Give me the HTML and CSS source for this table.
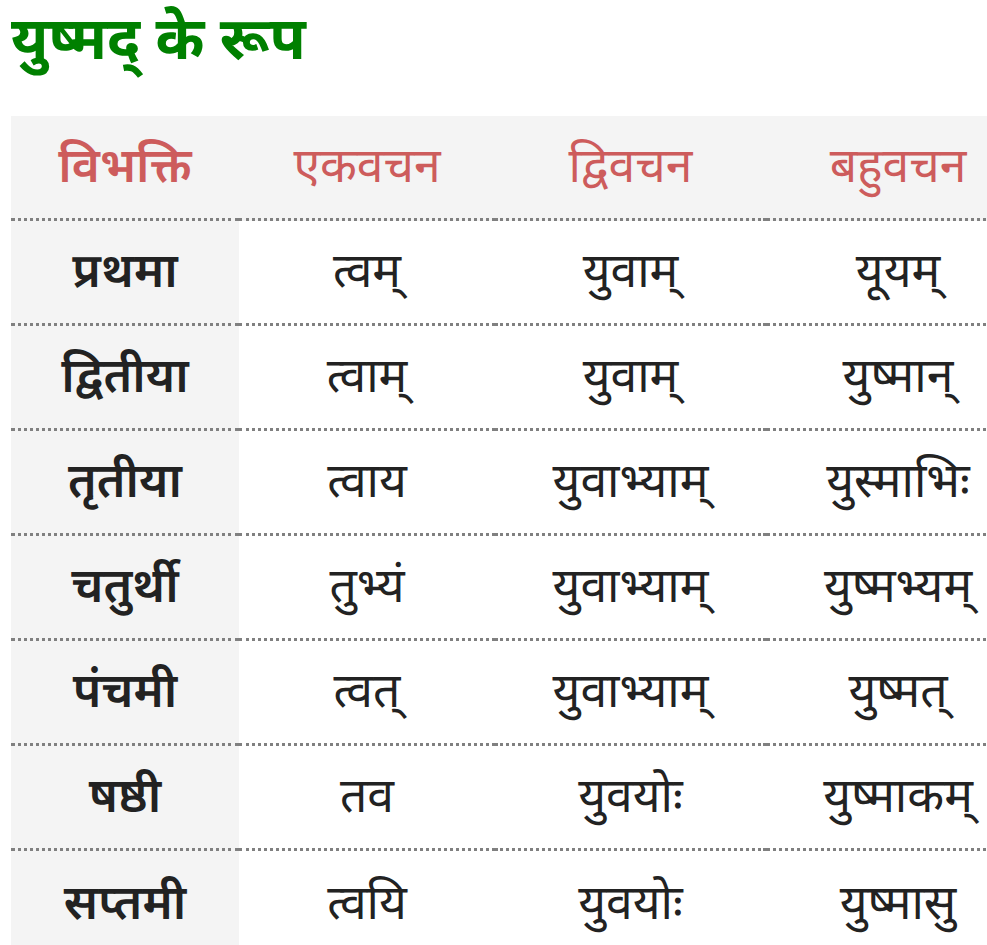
FILE: index.html
```html
<!DOCTYPE html>
<html lang="sa">
<head>
<meta charset="utf-8">
<title>युष्मद् के रूप</title>
<link rel="stylesheet" href="styles.css">
</head>
<body>
<h1 class="title">युष्मद् के रूप</h1>
<table class="forms">
  <thead>
    <tr>
      <th class="c1">विभक्ति</th>
      <th class="c2">एकवचन</th>
      <th class="c3">द्विवचन</th>
      <th class="c4">बहुवचन</th>
    </tr>
  </thead>
  <tbody>
    <tr><th>प्रथमा</th><td>त्वम्</td><td>युवाम्</td><td>यूयम्</td></tr>
    <tr><th>द्वितीया</th><td>त्वाम्</td><td>युवाम्</td><td>युष्मान्</td></tr>
    <tr><th>तृतीया</th><td>त्वाय</td><td>युवाभ्याम्</td><td>युस्माभिः</td></tr>
    <tr><th>चतुर्थी</th><td>तुभ्यं</td><td>युवाभ्याम्</td><td>युष्मभ्यम्</td></tr>
    <tr><th>पंचमी</th><td>त्वत्</td><td>युवाभ्याम्</td><td>युष्मत्</td></tr>
    <tr><th>षष्ठी</th><td>तव</td><td>युवयोः</td><td>युष्माकम्</td></tr>
    <tr><th>सप्तमी</th><td>त्वयि</td><td>युवयोः</td><td>युष्मासु</td></tr>
  </tbody>
</table>
</body>
</html>
```
FILE: styles.css
```css
html, body {
  margin: 0;
  padding: 0;
  background: #fff;
}
body {
  padding: 0 11px;
  font-family: "Noto Sans Devanagari", "Noto Sans", sans-serif;
  color: #222;
  width: 1100px;
}
.title {
  margin: 0;
  height: 116px;
  box-sizing: border-box;
  font-size: 59px;
  line-height: 90px;
  font-weight: 700;
  color: #008000;
}
.forms {
  border-collapse: separate;
  border-spacing: 0;
  table-layout: fixed;
  width: 1019px;
  font-size: 48px;
}
.forms th, .forms td {
  box-sizing: border-box;
  text-align: center;
  vertical-align: middle;
  padding: 8px 0 0;
  line-height: 1.2;
  height: 105px;
  border-bottom: 3px dotted #808080;
}
.forms thead th {
  background: #f4f4f4;
  font-weight: 400;
  color: #cd5c5c;
}
.forms thead th.c1 { font-weight: 600; width: 228px; }
.forms thead th.c2 { width: 256px; }
.forms thead th.c3 { width: 271px; }
.forms thead th.c4 { width: 264px; }
.forms tbody th {
  background: #f4f4f4;
  font-weight: 600;
}
.forms tbody tr:last-child th, .forms tbody tr:last-child td {
  border-bottom: none;
}
```
